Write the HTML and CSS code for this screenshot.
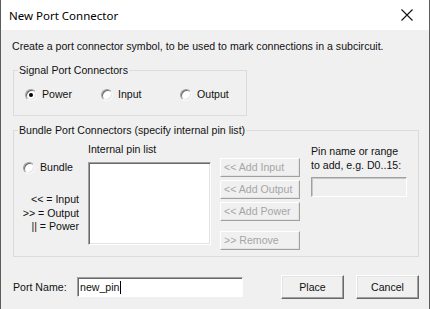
FILE: index.html
```html
<!DOCTYPE html>
<html>
<head>
<meta charset="utf-8">
<link rel="stylesheet" href="styles.css">
</head>
<body>
<div class="window">
  <div class="titlebar">
    <span class="title">New Port Connector</span>
    <svg class="close" width="12" height="12" viewBox="0 0 12 12"><path d="M0.5 0.5 L11.5 11.5 M11.5 0.5 L0.5 11.5" stroke="#111" stroke-width="1.1" fill="none"/></svg>
  </div>
  <div class="content">
    <p class="desc">Create a port connector symbol, to be used to mark connections in a subcircuit.</p>
    <fieldset class="group signal">
      <legend>Signal Port Connectors</legend>
      <div class="radios">
        <label class="radio r-power"><span class="dot checked"></span>Power</label>
        <label class="radio r-input"><span class="dot"></span>Input</label>
        <label class="radio r-output"><span class="dot"></span>Output</label>
      </div>
    </fieldset>
    <fieldset class="group bundle">
      <legend>Bundle Port Connectors (specify internal pin list)</legend>
      <div class="bundle-row">
        <div class="col-left">
          <label class="radio r-bundle"><span class="dot"></span>Bundle</label>
          <div class="key">
            <div>&lt;&lt; = Input</div>
            <div>&gt;&gt; = Output</div>
            <div>|| = Power</div>
          </div>
        </div>
        <div class="col-list">
          <div class="list-label">Internal pin list</div>
          <div class="listbox"></div>
        </div>
        <div class="col-buttons">
          <div class="btn disabled">&lt;&lt; Add Input</div>
          <div class="btn disabled">&lt;&lt; Add Output</div>
          <div class="btn disabled">&lt;&lt; Add Power</div>
          <div class="btn disabled remove">&gt;&gt; Remove</div>
        </div>
        <div class="col-pin">
          <div class="pin-label">Pin name or range<br>to add, e.g. D0..15:</div>
          <div class="pin-box"></div>
        </div>
      </div>
    </fieldset>
    <div class="bottom">
      <span class="port-label">Port Name:</span>
      <div class="name-box">new_pin<span class="caret"></span></div>
      <div class="spacer"></div>
      <div class="btn push">Place</div>
      <div class="btn push cancel">Cancel</div>
    </div>
  </div>
</div>
</body>
</html>
```
FILE: styles.css
```css
html, body {
  margin: 0;
  padding: 0;
  width: 430px;
  height: 309px;
  overflow: hidden;
  background: #f0f0f0;
}
.window {
  width: 430px;
  height: 309px;
  box-sizing: border-box;
  border-left: 1px solid #5c5c5c;
  border-right: 1px solid #5c5c5c;
  display: flex;
  flex-direction: column;
  font-family: "Liberation Sans", Arial, sans-serif;
  font-size: 10.6px;
  color: #111;
}
.titlebar {
  height: 30px;
  flex: none;
  background: #fff;
  display: flex;
  align-items: center;
  padding: 0 16px 0 8px;
}
.title {
  font-family: "Noto Sans", "Open Sans", sans-serif;
  font-size: 11.5px;
  color: #000;
  flex: 1;
}
.close {
  display: block;
}
.content {
  flex: 1;
  background: #f0f0f0;
  padding: 10px 10px 0 11px;
}
.desc {
  margin: 0;
  line-height: 13px;
  height: 13px;
  white-space: nowrap;
}
.group {
  margin: 11px 0 0 1px;
  border: 1px solid #dcdcdc;
  padding: 0;
  min-width: 0;
  box-sizing: border-box;
}
.group legend {
  padding: 0 1px;
  margin-left: 4px;
  line-height: 13px;
}
.signal {
  width: 234px;
  height: 52px;
}
.radios {
  display: flex;
  padding: 11px 0 0 11px;
  line-height: 13px;
}
.radio {
  display: flex;
  align-items: center;
  white-space: nowrap;
}
.dot {
  width: 12px;
  height: 12px;
  box-sizing: border-box;
  border-radius: 50%;
  background: #fff;
  border: 1px solid;
  border-color: #a0a0a0 #f8f8f8 #f8f8f8 #a0a0a0;
  box-shadow: inset 1px 1px 0 #696969, inset -1px -1px 0 #e3e3e3;
  margin-right: 5px;
  position: relative;
  flex: none;
}
.dot.checked::after {
  content: "";
  position: absolute;
  left: 3px;
  top: 3px;
  width: 4px;
  height: 4px;
  border-radius: 50%;
  background: #000;
}
.r-power { width: 76px; }
.r-input { width: 79px; }
.bundle {
  margin-top: 8px;
  width: 406px;
  height: 133px;
}
.bundle-row {
  display: flex;
  padding-top: 6px;
}
.col-left {
  width: 74px;
  flex: none;
}
.r-bundle {
  padding: 18px 0 0 9px;
  line-height: 13px;
}
.key {
  margin-top: 19px;
  text-align: right;
  padding-right: 9px;
  line-height: 13.5px;
}
.col-list {
  width: 123px;
  flex: none;
}
.list-label {
  line-height: 13px;
  height: 13px;
}
.listbox {
  margin-top: 6px;
  height: 83px;
  box-sizing: border-box;
  background: #fff;
  border: 1px solid;
  border-color: #a0a0a0 #fff #fff #a0a0a0;
  box-shadow: inset 1px 1px 0 #696969, inset -1px -1px 0 #e3e3e3;
}
.col-buttons {
  width: 80px;
  flex: none;
  margin-left: 9px;
  padding-top: 15px;
  display: flex;
  flex-direction: column;
  gap: 3px;
}
.btn {
  height: 19px;
  box-sizing: border-box;
  line-height: 17px;
  border: 1px solid;
  border-color: #fff #a0a0a0 #a0a0a0 #fff;
  white-space: nowrap;
}
.btn.disabled {
  color: #a6a6a6;
  padding-left: 3px;
  background: #f0f0f0;
  border-color: #fff #a0a0a0 #a0a0a0 #fff;
  box-shadow: inset -1px -1px 0 #e3e3e3;
}
.btn.remove {
  margin-top: 7px;
}
.col-pin {
  margin-left: 11px;
  width: 96px;
  flex: none;
}
.pin-label {
  padding-top: 2px;
  line-height: 13.5px;
}
.pin-box {
  margin-top: 5px;
  height: 20px;
  box-sizing: border-box;
  background: #f0f0f0;
  border: 1px solid;
  border-color: #a0a0a0 #fff #fff #a0a0a0;
  box-shadow: inset 1px 1px 0 #c8c8c8;
}
.bottom {
  display: flex;
  align-items: center;
  margin-top: 18px;
  padding-left: 1px;
}
.port-label {
  width: 64px;
  flex: none;
  line-height: 13px;
}
.name-box {
  width: 166px;
  height: 20px;
  box-sizing: border-box;
  background: #fff;
  border: 1px solid;
  border-color: #a0a0a0 #fff #fff #a0a0a0;
  box-shadow: inset 1px 1px 0 #696969;
  padding-left: 2px;
  line-height: 18px;
  display: flex;
  align-items: center;
}
.caret {
  display: inline-block;
  width: 1px;
  height: 13px;
  background: #000;
  margin-left: 1px;
}
.spacer {
  flex: 1;
}
.btn.push {
  width: 63px;
  height: 24px;
  line-height: 22px;
  text-align: center;
  background: #f0f0f0;
  border-color: #fff #696969 #696969 #fff;
  box-shadow: inset -1px -1px 0 #a0a0a0, inset 1px 1px 0 #e3e3e3;
}
.btn.cancel {
  margin-left: 12px;
}
```
